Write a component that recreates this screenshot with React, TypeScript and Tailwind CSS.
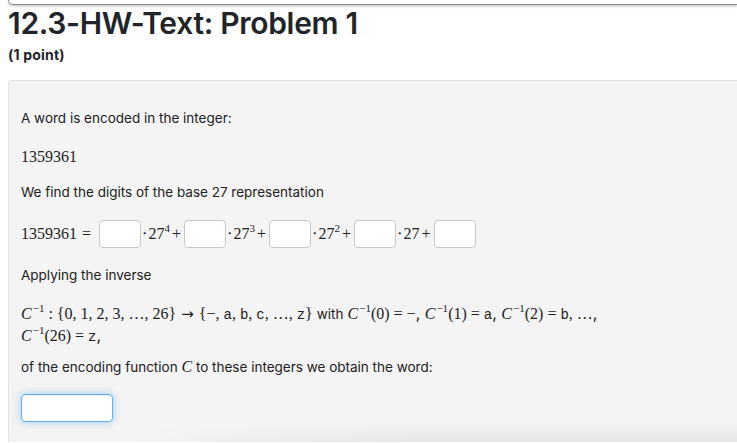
import React from "react";

const SANS = "font-['Inter','Liberation_Sans',sans-serif]";
const SERIF = "font-['Liberation_Serif','DejaVu_Serif',serif]";
const MONO = "font-['Liberation_Mono',monospace]";

function Box() {
  return <span className="inline-block w-[42px] h-[28px] bg-white border border-[#c9c9c9] rounded-[4px]" />;
}

function Cinv() {
  return (
    <span>
      <i>C</i>
      <sup className="text-[11px] top-[-7px] ml-[1px]">−1</sup>
    </span>
  );
}

function T({ c }: { c: string }) {
  return <span className={`${MONO} text-[14px]`}>{c}</span>;
}

function Pow({ e }: { e?: string }) {
  return (
    <span className="ml-[1px] mr-[3px] whitespace-nowrap">
      <span className="mr-[1px]">⋅</span>27
      {e ? <sup className="text-[11px] top-[-7px]">{e}</sup> : null}
      <span className="ml-[2px]">+</span>
    </span>
  );
}

export default function App() {
  return (
    <div className={`${SANS} bg-white text-[#222] w-[737px] h-[443px] overflow-hidden`}>
      <div className="ml-2 h-[5px] border-l border-b border-[#8f8f8f] rounded-bl-[5px] shadow-[0_1px_3px_rgba(0,0,0,0.3)]" />
      <h1 className="ml-2 text-[30px] leading-[36px] font-semibold text-[#212529] tracking-[-0.3px]">
        12.3-HW-Text: Problem 1
      </h1>
      <div className="ml-2 mt-[4px] text-[14px] leading-[20px] font-bold text-[#212529] tracking-[0.2px]">(1 point)</div>

      <div className="ml-2 mt-[15px] bg-[#f4f4f4] border-l border-t border-[#e3e3e3] rounded-tl-[4px] pl-3 pt-[27px]">
        <p className="text-[13.5px] leading-[20px]">A word is encoded in the integer:</p>
        <p className={`${SERIF} mt-[19px] text-[16px] leading-[20px]`}>1359361</p>
        <p className="mt-[15px] text-[13.5px] leading-[20px]">We find the digits of the base 27 representation</p>

        <div className={`${SERIF} mt-[18px] flex items-center h-[28px] text-[16px]`}>
          <span>1359361</span>
          <span className="ml-[5px] mr-[8px]">=</span>
          <Box />
          <Pow e="4" />
          <Box />
          <Pow e="3" />
          <Box />
          <Pow e="2" />
          <Box />
          <Pow />
          <Box />
        </div>

        <p className="mt-[17px] text-[13.5px] leading-[20px]">Applying the inverse</p>

        <div className={`${SERIF} mt-[18px] text-[16px] leading-[20px] whitespace-nowrap`}>
          <Cinv />
          <span className="mx-[4px]">:</span>
          {"{0, 1, 2, 3, …, 26}"}
          <span className="mx-[5px] font-['DejaVu_Sans',sans-serif] text-[15px]">→</span>
          {"{−, "}
          <T c="a" />
          {", "}
          <T c="b" />
          {", "}
          <T c="c" />
          {", …, "}
          <T c="z" />
          {"}"}
          <span className={`${SANS} text-[13.5px] mx-[4px]`}>with</span>
          <Cinv />
          (0)<span className="mx-[4px]">=</span>−<span className={SANS}>, </span>
          <Cinv />
          (1)<span className="mx-[4px]">=</span>
          <T c="a" />
          <span className={SANS}>, </span>
          <Cinv />
          (2)<span className="mx-[4px]">=</span>
          <T c="b" />
          {", …"}
          <span className={SANS}>,</span>
          <br />
          <Cinv />
          (26)<span className="mx-[4px]">=</span>
          <T c="z" />
          <span className={SANS}>,</span>
        </div>

        <p className="mt-[10px] text-[13.5px] leading-[20px]">
          of the encoding function <i className={`${SERIF} text-[16px]`}>C</i> to these integers we obtain the word:
        </p>

        <div className="mt-[17px] w-[92px] h-[28px] bg-white border border-[#66afe9] rounded-[4px] shadow-[inset_0_1px_1px_rgba(0,0,0,0.075),0_0_8px_rgba(102,175,233,0.6)]" />

        <div className="-ml-3 h-[20px] bg-[linear-gradient(to_bottom,rgba(0,0,0,0)_0%,rgba(0,0,0,0.06)_100%)] [mask-image:linear-gradient(to_right,transparent_120px,black_420px)]" />
      </div>
    </div>
  );
}
